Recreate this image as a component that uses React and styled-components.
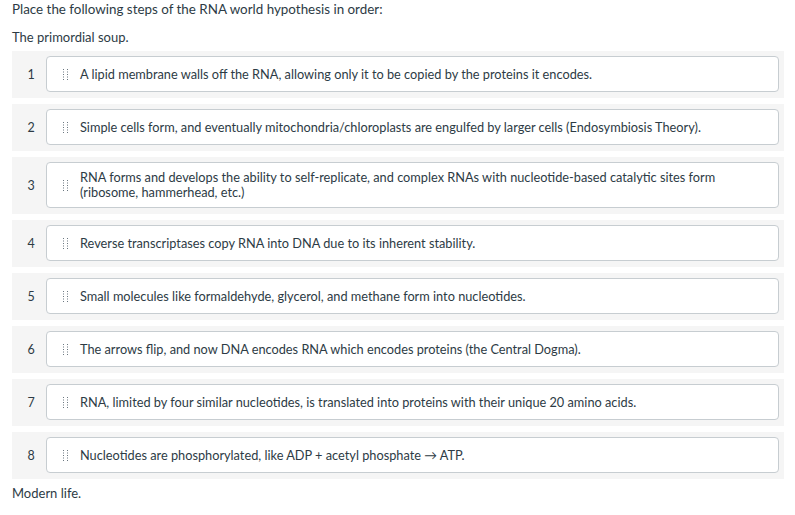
import React from "react";
import styled, { createGlobalStyle } from "styled-components";

const GlobalStyle = createGlobalStyle`
  body {
    margin: 0;
    background: #fff;
    font-family: Lato, "Liberation Sans", sans-serif;
    color: #2d3b45;
  }
`;

const Page = styled.div`
  padding: 1px 11px 0 12px;
  font-size: 13px;
`;

const Prompt = styled.p`
  margin: 0;
  line-height: 16px;
  font-size: ${(p) => p.$size || 13}px;
  margin-bottom: ${(p) => p.$gap || 0}px;
`;

const List = styled.ol`
  list-style: none;
  margin: 0 0 6px;
  padding: 0;
  display: flex;
  flex-direction: column;
  gap: 6px;
`;

const Row = styled.li`
  display: flex;
  align-items: center;
  background: #f5f5f5;
  padding: 5px 5px 6px 0;
`;

const Num = styled.span`
  width: 34px;
  padding-left: 4px;
  box-sizing: border-box;
  text-align: center;
  flex-shrink: 0;
  font-size: 12.5px;
  color: #2d3b45;
`;

const Card = styled.div`
  flex: 1;
  display: flex;
  align-items: center;
  min-height: 36px;
  box-sizing: border-box;
  background: #fff;
  border: 1px solid #c7cdd1;
  border-radius: 4px;
  padding: 7px 55px 7px 14px;
`;

const Handle = styled.svg`
  flex-shrink: 0;
  margin-right: 11px;
`;

const Text = styled.span`
  font-size: 12.75px;
  line-height: 15px;
`;

const Grip = () => (
  <Handle width="8" height="13" viewBox="0 0 8 13">
    {[0, 1, 2, 3, 4].map((r) =>
      [2, 6].map((c) => (
        <rect key={`${r}-${c}`} x={c} y={1 + r * 2.5} width="1" height="1" fill="#6b7780" />
      ))
    )}
  </Handle>
);

const steps = [
  "A lipid membrane walls off the RNA, allowing only it to be copied by the proteins it encodes.",
  "Simple cells form, and eventually mitochondria/chloroplasts are engulfed by larger cells (Endosymbiosis Theory).",
  "RNA forms and develops the ability to self-replicate, and complex RNAs with nucleotide-based catalytic sites form (ribosome, hammerhead, etc.)",
  "Reverse transcriptases copy RNA into DNA due to its inherent stability.",
  "Small molecules like formaldehyde, glycerol, and methane form into nucleotides.",
  "The arrows flip, and now DNA encodes RNA which encodes proteins (the Central Dogma).",
  "RNA, limited by four similar nucleotides, is translated into proteins with their unique 20 amino acids.",
  "Nucleotides are phosphorylated, like ADP + acetyl phosphate \u2192 ATP.",
];

const App = () => (
  <>
    <GlobalStyle />
    <Page>
      <Prompt $gap={12} $size={13.4}>
        Place the following steps of the RNA world hypothesis in order:
      </Prompt>
      <Prompt $gap={6}>The primordial soup.</Prompt>
      <List>
        {steps.map((s, i) => (
          <Row key={i}>
            <Num>{i + 1}</Num>
            <Card>
              <Grip />
              <Text>{s}</Text>
            </Card>
          </Row>
        ))}
      </List>
      <Prompt>Modern life.</Prompt>
    </Page>
  </>
);

export default App;
